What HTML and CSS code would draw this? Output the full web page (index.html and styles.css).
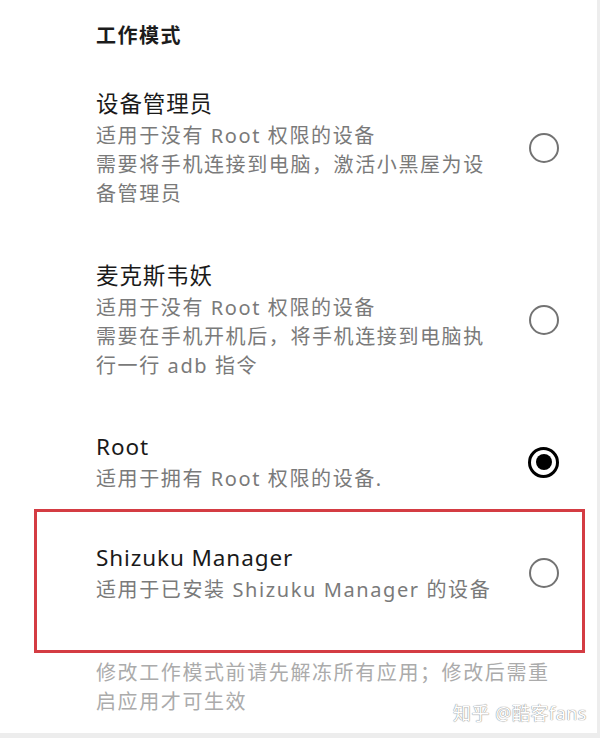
FILE: index.html
```html
<!DOCTYPE html>
<html>

<head>
    <title>工作模式</title>
    <link rel="stylesheet" href="styles.css">
</head>

<body>
    <div class="page">
        <h3 class="section-title">工作模式</h3>

        <div class="mode-list">
            <div class="mode">
                <div class="mode-text">
                    <div class="mode-name">设备管理员</div>
                    <div class="mode-desc">适用于没有 Root 权限的设备<br>需要将手机连接到电脑，激活小黑屋为设备管理员</div>
                </div>
                <span class="radio"></span>
            </div>

            <div class="mode">
                <div class="mode-text">
                    <div class="mode-name">麦克斯韦妖</div>
                    <div class="mode-desc">适用于没有 Root 权限的设备<br>需要在手机开机后，将手机连接到电脑执行一行 adb 指令</div>
                </div>
                <span class="radio"></span>
            </div>

            <div class="mode">
                <div class="mode-text">
                    <div class="mode-name">Root</div>
                    <div class="mode-desc">适用于拥有 Root 权限的设备.</div>
                </div>
                <span class="radio checked"></span>
            </div>

            <div class="highlight">
                <div class="mode">
                    <div class="mode-text">
                        <div class="mode-name">Shizuku Manager</div>
                        <div class="mode-desc">适用于已安装 Shizuku Manager 的设备</div>
                    </div>
                    <span class="radio"></span>
                </div>
            </div>
        </div>

        <p class="note">修改工作模式前请先解冻所有应用；修改后需重启应用才可生效</p>

        <div class="watermark">知乎 @酷客fans</div>
    </div>
</body>

</html>
```

FILE: styles.css
```css
/* Work mode settings screen */
body {
    background-color: #ededed;
    font-family: "Noto Sans", "Noto Sans CJK SC", sans-serif;
    margin: 0;
    padding: 0;
}

.page {
    position: relative;
    width: 597px;
    height: 733px;
    background-color: #ffffff;
    overflow: hidden;
}

.section-title {
    margin: 0 0 12px 0;
    padding: 21px 0 0 96px;
    font-size: 20px;
    line-height: 30px;
    font-weight: bold;
    letter-spacing: 1.5px;
    color: #1c1c1c;
}

.mode {
    display: flex;
    align-items: center;
    padding: 25px 38px 26.5px 96px;
}

.mode-text {
    flex: 1;
    padding-right: 36px;
}

.mode-name {
    font-size: 22.5px;
    line-height: 32px;
    letter-spacing: 0.9px;
    color: #1a1a1a;
    margin-bottom: 1px;
}

.mode-desc {
    font-size: 20px;
    line-height: 29px;
    letter-spacing: 1.6px;
    color: #7a7a7a;
}

.radio {
    flex: none;
    width: 26px;
    height: 26px;
    border: 2.5px solid #737373;
    border-radius: 50%;
    display: flex;
    justify-content: center;
    align-items: center;
}

.radio.checked {
    width: 25px;
    height: 25px;
    border: 3px solid #000000;
}

.radio.checked::after {
    content: "";
    width: 16px;
    height: 16px;
    border-radius: 50%;
    background-color: #000000;
}

.highlight {
    margin: -11px 12px 0 34px;
    border: 3px solid #d43c43;
}

.highlight .mode {
    padding: 30px 23px 46px 59px;
}

.highlight .mode-text {
    padding-right: 20px;
}

.note {
    margin: 5px 0 0 0;
    padding: 0 40px 0 96px;
    font-size: 20px;
    line-height: 29px;
    letter-spacing: 1.6px;
    color: #ababab;
}

.watermark {
    position: absolute;
    right: 10px;
    bottom: 11px;
    font-size: 18px;
    line-height: 18px;
    color: #ffffff;
    text-shadow: 0 0 1px #8a8a8a, 0 0 1px #8a8a8a;
    letter-spacing: 0.5px;
}
```
